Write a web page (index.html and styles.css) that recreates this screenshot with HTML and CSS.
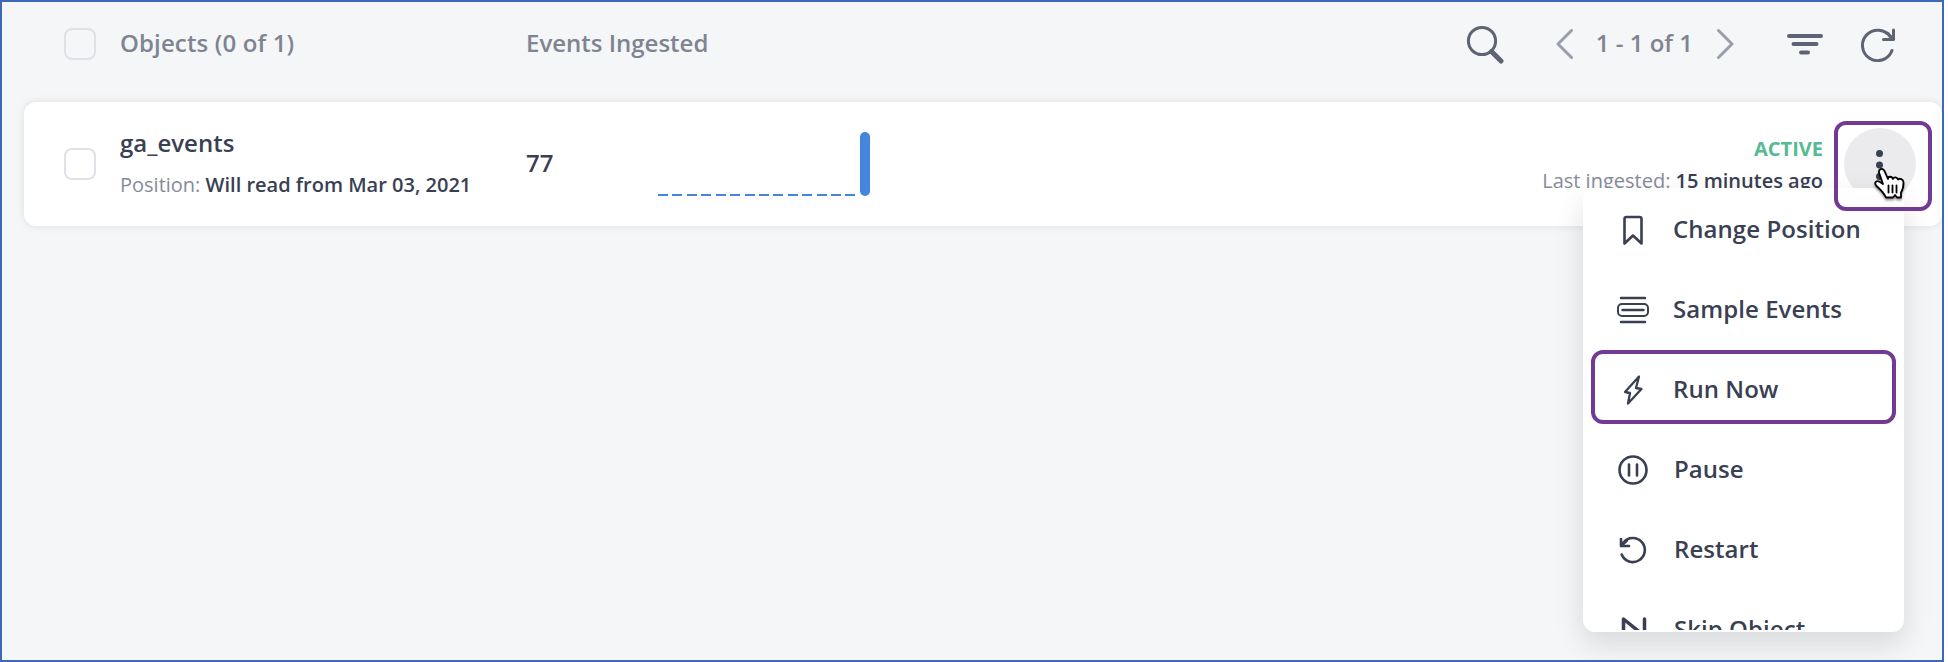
FILE: index.html
```html
<!DOCTYPE html>
<html lang="en">
  <head>
    <meta charset="utf-8">
    <title>Objects</title>
    <link rel="stylesheet" href="styles.css">
  </head>
  <body>
    <div class="page">
      <header class="header">
        <span class="checkbox"></span>
        <span class="col-name title objects-title">Objects (0 of 1)</span>
        <span class="title">Events Ingested</span>
        <div class="tools">
          <svg class="search" width="40" height="40" viewBox="0 0 40 40">
            <circle cx="17" cy="17" r="13.600" stroke-width="3"/>
            <path d="M26.500 27.500l9.500 9.500" stroke-width="5"/>
          </svg>
          <svg class="prev" width="18" height="32" viewBox="0 0 18 32"><path d="M15.500 2.500L2 16l13.500 13.500"/></svg>
          <span class="pages"><b>1 - 1</b> of <b>1</b></span>
          <svg class="next" width="18" height="32" viewBox="0 0 18 32"><path d="M2.500 2.500L16 16L2.500 29.500"/></svg>
          <svg class="filter" width="38" height="24" viewBox="0 0 38 24"><path d="M3 4h32M7.500 12h23M15 20.500h7"/></svg>
          <svg class="refresh" width="36" height="36" viewBox="0 0 36 36">
            <path d="M32 24.500A15.200 15.200 0 1 1 30.500 11.200M33.500 4v9.500M23.500 13.500H33.500M27.500 7l6 6.500"/>
          </svg>
        </div>
      </header>

      <div class="card">
        <span class="checkbox"></span>
        <div class="col-name">
          <div class="name">ga_events</div>
          <div class="position">Position: <b>Will read from Mar 03, 2021</b></div>
        </div>
        <span class="count">77</span>
        <div class="chart">
          <i></i><i></i><i></i><i></i><i></i><i></i><i></i><i></i><i></i><i></i><i></i><i></i><i></i><i></i>
          <i class="full"></i>
        </div>
        <div class="status">
          <div class="active">ACTIVE</div>
          <div class="last">Last ingested: <b>15 minutes ago</b></div>
        </div>
        <div class="more">
          <svg width="72" height="72" viewBox="0 0 72 72">
            <circle cx="35.500" cy="25.500" r="3.500"/>
            <circle cx="35.500" cy="37" r="3.500"/>
            <circle cx="35.500" cy="48.500" r="3.500"/>
          </svg>
        </div>

        <div class="menu">
          <ul>
            <li>
              <svg width="32" height="32" viewBox="0 0 32 32"><path d="M7.500 29.500V5a2 2 0 0 1 2-2h13a2 2 0 0 1 2 2V29.500L16 21.500z"/></svg>
              <span>Change Position</span>
            </li>
            <li>
              <svg width="32" height="32" viewBox="0 0 32 32">
                <path d="M4 4h24M5.500 16h21M4 28h24" stroke-width="2.500"/>
                <rect x="1" y="10" width="30" height="12" rx="4" stroke-width="2"/>
              </svg>
              <span>Sample Events</span>
            </li>
            <li>
              <svg width="32" height="32" viewBox="0 0 32 32"><path d="M22 2.500L8 18l5 1L11 29.500 24.500 15l-5.500-1z" stroke-width="2.300"/></svg>
              <span>Run Now</span>
            </li>
            <li class="wide">
              <svg width="32" height="32" viewBox="0 0 32 32">
                <circle cx="16" cy="16" r="13.500"/>
                <path d="M12 10.500v11M20 10.500v11"/>
              </svg>
              <span>Pause</span>
            </li>
            <li class="wide">
              <svg width="32" height="32" viewBox="0 0 32 32"><path d="M4.700 20.500A12 12 0 1 0 6.500 8.500M4 5v7M4 12h8M4 12l6-5.500"/></svg>
              <span>Restart</span>
            </li>
            <li class="wide">
              <svg width="32" height="32" viewBox="0 0 32 32"><path d="M6.500 28V5l21 17V5v23" stroke-width="3.500"/></svg>
              <span>Skip Object</span>
            </li>
          </ul>
        </div>

        <div class="mark mark-more"></div>
        <div class="mark mark-run"></div>
        <svg class="cursor" width="34" height="36" viewBox="0 0 34 36">
          <path d="M10 18L6.500 8C4.500 3 9.500 1 11.500 5l3.500 8c0-3 4-3 5 0 1-2.500 4-2 5 .5 1.500-1.500 5.500-.5 5.500 3 0 4-.5 7-2.500 10v5h-4l-2-2.500-2 2.500h-7c-2-4.500-5-7.500-9.500-11.500-3-3.500 0-6 3.500-4z"/>
          <path d="M15.500 19.500v7M19.500 19.500v7M23.500 19.500v7"/>
        </svg>
      </div>
    </div>
  </body>
</html>
```
FILE: styles.css
```css
* { box-sizing: border-box; }
body {
  margin: 0;
  background: #fff;
  font-family: "Open Sans", sans-serif;
  font-size: 24px;
  color: #3a4053;
}
b { font-weight: 600; }
svg {
  fill: none;
  stroke: #3a4053;
  stroke-width: 2.6;
  stroke-linecap: round;
  stroke-linejoin: round;
  flex: none;
}
.page {
  width: 1944px;
  height: 662px;
  border: 2px solid #3f68b9;
  background: #f4f6f8;
  overflow: hidden;
}
.header {
  display: flex;
  align-items: center;
  height: 84px;
  padding-left: 62px;
  margin-bottom: 16px;
  color: #7f8492;
}
.checkbox {
  flex: none;
  width: 32px;
  height: 32px;
  border: 2px solid #dfe1e6;
  border-radius: 8px;
  margin-right: 24px;
}
.col-name {
  flex: none;
  width: 406px;
  white-space: nowrap;
}
.title { font-weight: 600; padding-bottom: 3px; }
.objects-title { letter-spacing: .13px; }
.tools {
  display: flex;
  align-items: center;
  margin-left: auto;
  padding-right: 46px;
}
.tools svg { stroke: #5f6474; stroke-width: 3; }
.tools .search { margin-right: 51px; }
.tools .prev, .tools .next { stroke: #9a9eaa; }
.pages { margin: 0 23px 0 22px; padding-bottom: 3px; font-weight: 600; }
.tools .filter { margin: 0 36px 0 52px; stroke-width: 4; }

.card {
  position: relative;
  display: flex;
  align-items: center;
  height: 124px;
  margin-left: 22px;
  padding: 0 26px 0 40px;
  background: #fff;
  border-radius: 12px;
  box-shadow: 0 0 8px rgba(0, 0, 0, .1);
}
.name { font-weight: 600; line-height: 30px; margin-bottom: 11px; }
.position, .last { font-size: 20px; line-height: 32px; color: #878b99; }
.position b, .last b { color: #3a4053; }
.count { width: 132px; padding-bottom: 3px; font-weight: 600; }
.chart {
  display: flex;
  justify-content: space-between;
  align-items: flex-end;
  width: 212px;
  height: 64px;
}
.chart i { width: 10px; height: 2px; background: #4485dd; }
.chart .full { height: 64px; border-radius: 5px; }
.status { margin-left: auto; padding-top: 2px; text-align: right; }
.active { font-size: 20px; line-height: 32px; font-weight: 700; color: #56ba93; }
.more {
  width: 72px;
  height: 72px;
  margin-left: 21px;
  border-radius: 50%;
  background: #ebebed;
}
.more svg { fill: #3a4053; stroke: none; }

.menu {
  position: absolute;
  top: 86px;
  right: 38px;
  width: 321px;
  height: 444px;
  padding: 2px 0;
  background: #fff;
  border-radius: 12px;
  box-shadow: 0 12px 30px rgba(0, 0, 0, .12);
}
.menu ul {
  height: 440px;
  margin: 0;
  padding: 0;
  overflow: hidden;
  list-style: none;
}
.menu li {
  display: flex;
  align-items: center;
  gap: 24px;
  height: 80px;
  padding-left: 34px;
  font-weight: 600;
  letter-spacing: .06px;
}
.menu span { padding-bottom: 3px; }
.menu .wide { gap: 25px; }

/* highlighted areas */
.mark {
  position: absolute;
  border: 4px solid #733a94;
  border-radius: 12px;
}
.mark-more { top: 19px; right: 10px; width: 98px; height: 90px; }
.mark-run { top: 248px; right: 46px; width: 305px; height: 74px; }
.cursor {
  position: absolute;
  top: 64px;
  right: 35px;
  fill: #fff;
  stroke: #000;
  stroke-width: 1.8;
  filter: drop-shadow(0 2px 1px rgba(0, 0, 0, .4));
}
```
